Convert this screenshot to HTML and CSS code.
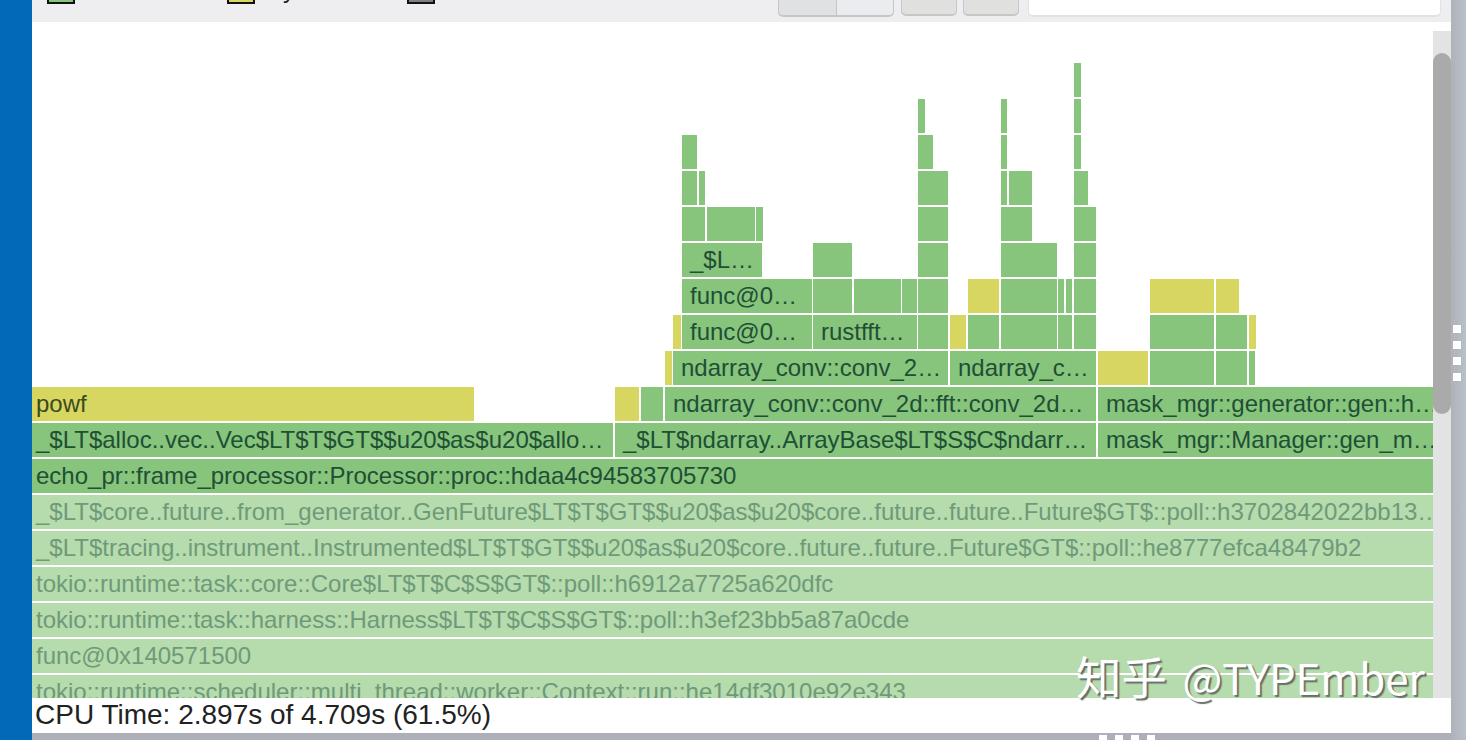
FILE: index.html
```html
<!DOCTYPE html>
<html lang="en">
<head>
<meta charset="utf-8">
<title>Flamegraph</title>
<link rel="stylesheet" href="styles.css">
</head>
<body>
<div class="app">
  <aside class="sidebar"></aside>
  <main class="main">
    <header class="toolbar">
      <div class="legend">
        <div class="legend-item"><span class="box box-green"></span><span class="legend-label">Native</span></div>
        <div class="legend-item"><span class="box box-yellow"></span><span class="legend-label">Python</span></div>
        <div class="legend-item"><span class="box box-gray"></span><span class="legend-label">Kernel</span></div>
      </div>
      <div class="controls">
        <div class="btn-group"><button class="btn btn-dark"></button><button class="btn btn-light"></button></div>
        <button class="btn btn-single"></button>
        <button class="btn btn-single"></button>
        <div class="search"></div>
      </div>
    </header>
    <section class="chart">
      <div class="flame">
        <div class="row"><div class="f g" style="left:1042px;width:7px"></div></div>
        <div class="row"><div class="f g" style="left:886px;width:7px"></div><div class="f g" style="left:969px;width:6px"></div><div class="f g" style="left:1042px;width:7px"></div></div>
        <div class="row"><div class="f g" style="left:650px;width:15px"></div><div class="f g" style="left:886px;width:15px"></div><div class="f g" style="left:969px;width:6px"></div><div class="f g" style="left:1042px;width:7px"></div></div>
        <div class="row"><div class="f g" style="left:650px;width:15px"></div><div class="f g" style="left:667px;width:6px"></div><div class="f g" style="left:886px;width:30px"></div><div class="f g" style="left:969px;width:6px"></div><div class="f g" style="left:977px;width:23px"></div><div class="f g" style="left:1042px;width:14px"></div></div>
        <div class="row"><div class="f g" style="left:650px;width:23px"></div><div class="f g" style="left:675px;width:48px"></div><div class="f g" style="left:724px;width:7px"></div><div class="f g" style="left:886px;width:30px"></div><div class="f g" style="left:969px;width:31px"></div><div class="f g" style="left:1042px;width:22px"></div></div>
        <div class="row"><div class="f g" style="left:650px;width:80px">_$L…</div><div class="f g" style="left:781px;width:39px"></div><div class="f g" style="left:886px;width:30px"></div><div class="f g" style="left:969px;width:56px"></div><div class="f g" style="left:1042px;width:22px"></div></div>
        <div class="row"><div class="f g" style="left:650px;width:130px">func@0…</div><div class="f g" style="left:781px;width:39px"></div><div class="f g" style="left:822px;width:47px"></div><div class="f g" style="left:870px;width:15px"></div><div class="f g" style="left:886px;width:30px"></div><div class="f y" style="left:936px;width:31px"></div><div class="f g" style="left:969px;width:56px"></div><div class="f g" style="left:1026px;width:6px"></div><div class="f g" style="left:1034px;width:6px"></div><div class="f g" style="left:1042px;width:22px"></div><div class="f y" style="left:1118px;width:64px"></div><div class="f y" style="left:1184px;width:23px"></div></div>
        <div class="row"><div class="f y" style="left:641px;width:8px"></div><div class="f g" style="left:650px;width:130px">func@0…</div><div class="f g" style="left:781px;width:104px">rustfft…</div><div class="f g" style="left:886px;width:30px"></div><div class="f y" style="left:918px;width:16px"></div><div class="f g" style="left:936px;width:31px"></div><div class="f g" style="left:969px;width:56px"></div><div class="f g" style="left:1026px;width:14px"></div><div class="f g" style="left:1042px;width:22px"></div><div class="f g" style="left:1118px;width:64px"></div><div class="f g" style="left:1184px;width:31px"></div><div class="f y" style="left:1217px;width:7px"></div></div>
        <div class="row"><div class="f y" style="left:633px;width:7px"></div><div class="f g" style="left:641px;width:275px">ndarray_conv::conv_2…</div><div class="f g" style="left:918px;width:146px">ndarray_c…</div><div class="f y" style="left:1066px;width:50px"></div><div class="f g" style="left:1118px;width:64px"></div><div class="f g" style="left:1184px;width:31px"></div><div class="f g" style="left:1217px;width:6px"></div></div>
        <div class="row"><div class="f y edge" style="left:0;width:442px">powf</div><div class="f y" style="left:583px;width:24px"></div><div class="f g" style="left:609px;width:22px"></div><div class="f g" style="left:633px;width:431px">ndarray_conv::conv_2d::fft::conv_2d…</div><div class="f g" style="left:1066px;width:335px">mask_mgr::generator::gen::h…</div></div>
        <div class="row"><div class="f g edge" style="left:0;width:581px">_$LT$alloc..vec..Vec$LT$T$GT$$u20$as$u20$allo…</div><div class="f g" style="left:583px;width:481px">_$LT$ndarray..ArrayBase$LT$S$C$ndarr…</div><div class="f g" style="left:1066px;width:335px">mask_mgr::Manager::gen_m…</div></div>
        <div class="row"><div class="f g edge full">echo_pr::frame_processor::Processor::proc::hdaa4c94583705730</div></div>
        <div class="row"><div class="f d edge full">_$LT$core..future..from_generator..GenFuture$LT$T$GT$$u20$as$u20$core..future..future..Future$GT$::poll::h3702842022bb13…</div></div>
        <div class="row"><div class="f d edge full">_$LT$tracing..instrument..Instrumented$LT$T$GT$$u20$as$u20$core..future..future..Future$GT$::poll::he8777efca48479b2</div></div>
        <div class="row"><div class="f d edge full">tokio::runtime::task::core::Core$LT$T$C$S$GT$::poll::h6912a7725a620dfc</div></div>
        <div class="row"><div class="f d edge full">tokio::runtime::task::harness::Harness$LT$T$C$S$GT$::poll::h3ef23bb5a87a0cde</div></div>
        <div class="row"><div class="f d edge full">func@0x140571500</div></div>
        <div class="row"><div class="f d edge full">tokio::runtime::scheduler::multi_thread::worker::Context::run::he14df3010e92e343</div></div>
      </div>
      <div class="scrollbar"><div class="thumb"></div></div>
    </section>
    <footer class="status">CPU Time: 2.897s of 4.709s (61.5%)</footer>
    <div class="strip"><i></i><i></i><i></i><i></i></div>
    <div class="watermark"><span class="wm-zh">知乎</span> @TYPEmber</div>
  </main>
  <div class="gutter"><i></i><i></i><i></i><i></i></div>
</div>
</body>
</html>
```
FILE: styles.css
```css
* { box-sizing: border-box; }
html, body { margin: 0; height: 100%; overflow: hidden; }
body { font-family: "Liberation Sans", Arial, sans-serif; background: #fff; color: #222; }
.app { display: flex; height: 740px; width: 1466px; }
.sidebar { width: 32px; flex: none; background: #0069b8; }
.main { position: relative; width: 1419px; flex: none; display: flex; flex-direction: column; }
.gutter { flex: 1; background: linear-gradient(90deg, #b0b2b9, #b9c0ca); padding: 325px 0 0 2px; display: flex; flex-direction: column; gap: 8px; }
.gutter i { display: block; width: 8px; height: 8px; background: #fff; }

.toolbar { height: 22px; flex: none; overflow: hidden; background: #eeeef1; display: flex; align-items: flex-end; justify-content: space-between; padding: 0 10px 0 15px; }
.legend { display: flex; align-items: flex-end; gap: 0; }
.legend-item { width: 180px; display: flex; align-items: flex-end; gap: 12px; }
.box { width: 28px; height: 28px; border: 2px solid #111; margin-bottom: 18px; flex: none; }
.box-green { background: #87c47c; }
.box-yellow { background: #d7d660; }
.box-gray { background: #808080; }
.legend-label { font-size: 24px; line-height: 28px; margin-bottom: 18px; color: #222; }
.controls { display: flex; align-items: flex-end; }
.btn { height: 30px; padding: 0; margin: 0; display: block; border: 1px solid #c6c6c6; border-bottom-width: 2px; border-radius: 0 0 5px 5px; background: #e0e0de; }
.btn-group { display: flex; margin: 0 7px 5px 0; }
.btn-dark { width: 58px; background: #e0e1e3; border-radius: 0 0 0 5px; border-right: 0; }
.btn-light { width: 58px; background: #ebecef; border-radius: 0 0 5px 0; border-left: 1px solid #c6c6c6; }
.btn-single { width: 56px; margin: 0 6px 6px 0; }
.btn-single + .search { margin-left: 3px; }
.search { width: 413px; height: 30px; margin-bottom: 5px; background: #fff; border: 1px solid #e2e2e2; border-bottom-width: 2px; border-radius: 0 0 5px 5px; }

.chart { flex: 1; min-height: 0; display: flex; overflow: hidden; background: #fff; }
.flame { width: 1401px; flex: none; overflow: hidden; padding-top: 41px; font-size: 24px; }
.row { position: relative; height: 34px; margin-bottom: 2px; }
.f { position: absolute; top: 0; height: 34px; line-height: 33px; padding-left: 8px; white-space: nowrap; overflow: hidden; color: #1f4f35; }
.f:empty { padding: 0; }
.f.g { background: #87c47c; }
.f.y { background: #d7d660; color: #3b4a20; }
.f.d { background: #b6dbad; color: #6e9a79; }
.f.edge { padding-left: 4px; }
.f.full { left: 0; width: 1401px; }

.scrollbar { width: 18px; flex: none; margin-top: 9px; padding-top: 22px; background: #e3e3e3; }
.thumb { height: 361px; background: #aaa; border-radius: 9px; }

.status { height: 35px; flex: none; background: #fff; font-size: 28px; line-height: 33px; padding-left: 3px; color: #222; }
.strip { height: 7px; flex: none; background: #adb0b8; padding: 2px 0 0 1067px; display: flex; gap: 8px; }
.strip i { display: block; width: 8px; height: 5px; background: #fff; }

.watermark { position: absolute; left: 1044px; top: 645px; font-family: "Noto Sans CJK SC", sans-serif; font-size: 42px; font-weight: 400; line-height: 60px; white-space: nowrap; color: #fff; text-shadow: 2px 2px 1px #66706a; }
.wm-zh { font-size: 45.5px; margin-right: 6px; }
```
